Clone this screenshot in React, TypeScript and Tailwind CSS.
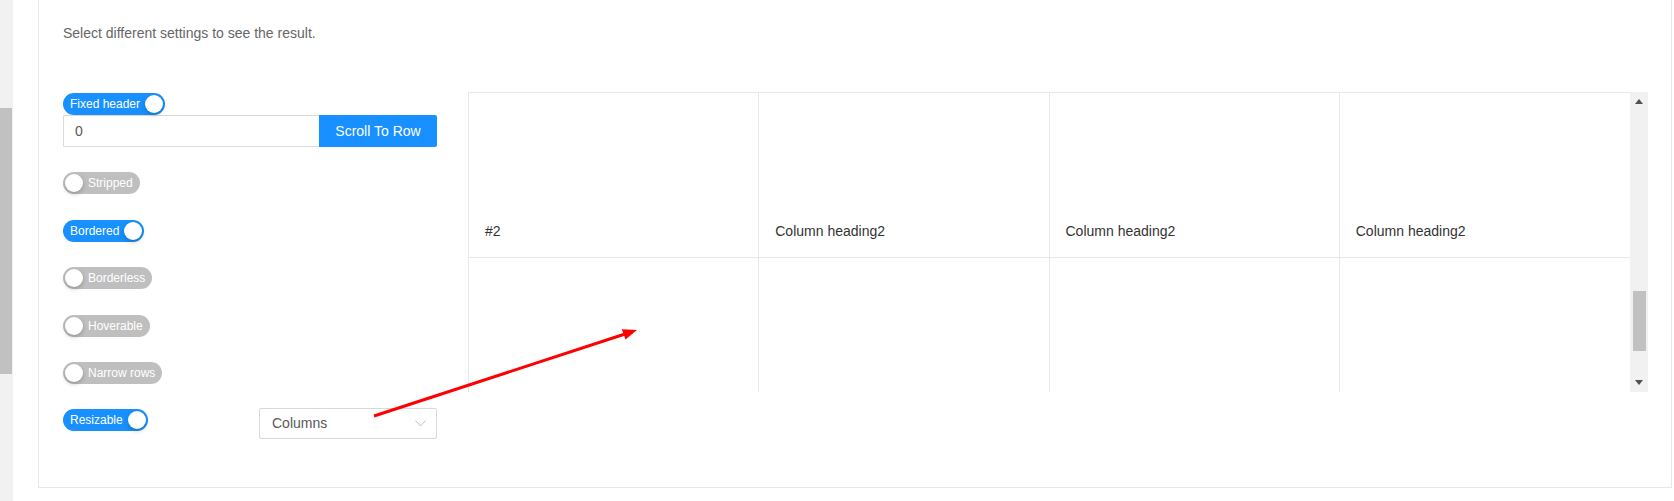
import React from "react";

function Toggle({ label, on }: { label: string; on: boolean }) {
  return (
    <div
      className={
        "relative flex h-[22px] w-fit items-center rounded-full text-[12px] leading-[22px] text-white whitespace-nowrap " +
        (on ? "bg-[#1890ff] pl-[7px] pr-[25px]" : "bg-[#bfbfbf] pl-[25px] pr-[7px]")
      }
    >
      <span>{label}</span>
      <span
        className={
          "absolute top-[2px] h-[18px] w-[18px] rounded-full bg-white shadow-[0_2px_4px_rgba(0,35,11,0.25)] " +
          (on ? "right-[2px]" : "left-[2px]")
        }
      />
    </div>
  );
}

const cols = ["#2", "Column heading2", "Column heading2", "Column heading2"];

export default function App() {
  return (
    <div className="relative flex h-[501px] w-[1674px] overflow-hidden bg-white font-['Liberation_Sans',Arial,sans-serif]">
      {/* left scrollbar strip */}
      <div className="flex h-full w-[13px] flex-col bg-[#f1f1f1]">
        <div className="h-[108px]" />
        <div className="h-[266px] w-[12px] bg-[#c1c1c1]" />
      </div>

      <div className="ml-[25px] w-[1634px]">
        <div className="h-[488px] w-[1634px] border-x border-b border-[#e8e8e8] pl-[24px]">
          <div className="pt-[22px] text-[14px] leading-[22px] text-[#666]">
            Select different settings to see the result.
          </div>

          <div className="mt-[48px] flex gap-[31px]">
            {/* controls */}
            <div className="flex w-[374px] flex-col items-start">
              <div className="mt-[1px] flex">
                <Toggle label="Fixed header" on />
              </div>
              <div className="flex h-[32px] w-[374px]">
                <div className="flex h-[32px] w-[256px] items-center rounded-l-[2px] border border-r-0 border-[#d9d9d9] pl-[11px] text-[14px] text-[#595959]">
                  0
                </div>
                <div className="flex h-[32px] flex-1 items-center justify-center rounded-r-[2px] bg-[#1890ff] text-[14px] text-white">
                  Scroll To Row
                </div>
              </div>
              <div className="mt-[25px] flex">
                <Toggle label="Stripped" on={false} />
              </div>
              <div className="mt-[26px] flex">
                <Toggle label="Bordered" on />
              </div>
              <div className="mt-[25px] flex">
                <Toggle label="Borderless" on={false} />
              </div>
              <div className="mt-[26px] flex">
                <Toggle label="Hoverable" on={false} />
              </div>
              <div className="mt-[25px] flex">
                <Toggle label="Narrow rows" on={false} />
              </div>
              <div className="mt-[24px] flex w-[374px] items-start justify-between">
                <div className="mt-[1px] flex">
                  <Toggle label="Resizable" on />
                </div>
                <div className="flex h-[31px] w-[178px] items-center justify-between rounded-[2px] border border-[#d9d9d9] pl-[12px] pr-[10px] text-[14px] text-[#595959]">
                  <span>Columns</span>
                  <svg width="11" height="7" viewBox="0 0 11 7" fill="none">
                    <path d="M0.5 0.5 L5.5 6 L10.5 0.5" stroke="#bfbfbf" strokeWidth="1" />
                  </svg>
                </div>
              </div>
            </div>

            {/* table */}
            <div className="flex h-[300px] w-[1180px]">
              <div className="flex h-full flex-1 flex-col overflow-hidden border-l border-t border-[#e8e8e8] text-[14px] leading-[22px] text-[#333]">
                <div className="grid h-[165px] grid-cols-4 border-b border-[#e8e8e8]">
                  {cols.map((c, i) => (
                    <div
                      key={i}
                      className={
                        "flex items-end px-[16px] pb-[15px] " +
                        (i < 3 ? "border-r border-[#e8e8e8]" : "")
                      }
                    >
                      {c}
                    </div>
                  ))}
                </div>
                <div className="grid flex-1 grid-cols-4">
                  {cols.map((_, i) => (
                    <div key={i} className={i < 3 ? "border-r border-[#e8e8e8]" : ""} />
                  ))}
                </div>
              </div>
              {/* scrollbar */}
              <div className="relative flex h-full w-[18px] flex-col items-center bg-[#f1f1f1]">
                <svg className="mt-[7px]" width="8" height="5" viewBox="0 0 8 5">
                  <path d="M0 5 L4 0 L8 5 Z" fill="#505050" />
                </svg>
                <div className="mt-[187px] h-[60px] w-[13px] bg-[#c1c1c1]" />
                <div className="flex-1" />
                <svg className="mb-[7px]" width="8" height="5" viewBox="0 0 8 5">
                  <path d="M0 0 L8 0 L4 5 Z" fill="#505050" />
                </svg>
              </div>
            </div>
          </div>
        </div>
      </div>

      {/* red annotation arrow */}
      <svg
        className="pointer-events-none absolute left-0 top-0"
        width="1674"
        height="501"
        viewBox="0 0 1674 501"
      >
        <line x1="374" y1="416" x2="625" y2="334" stroke="#ff0000" strokeWidth="3" />
        <polygon points="637,330 625.5,339.5 621.8,329.2" fill="#ff0000" />
      </svg>
    </div>
  );
}
